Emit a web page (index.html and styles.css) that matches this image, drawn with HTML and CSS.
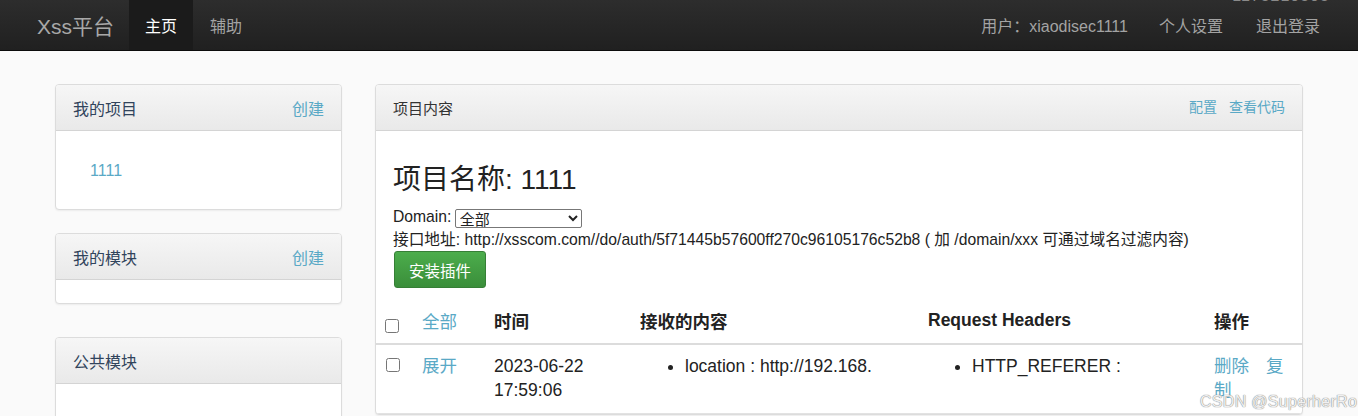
FILE: index.html
```html
<!DOCTYPE html>
<html lang="zh-CN">
<head>
<meta charset="utf-8">
<title>Xss平台</title>
<link rel="stylesheet" href="styles.css">
</head>
<body>
<header class="navbar">
  <div class="nav-left">
    <a class="brand">Xss平台</a>
    <a class="nav-item active">主页</a>
    <a class="nav-item">辅助</a>
  </div>
  <div class="nav-right">
    <span class="qq">1175219595</span>
    <a class="nav-item">用户：xiaodisec1111</a>
    <a class="nav-item">个人设置</a>
    <a class="nav-item">退出登录</a>
  </div>
</header>

<div class="container">
  <aside class="sidebar">
    <section class="panel">
      <div class="panel-head"><span class="side-title">我的项目</span><a class="link">创建</a></div>
      <div class="panel-body list"><a class="link">1111</a></div>
    </section>
    <section class="panel">
      <div class="panel-head"><span class="side-title">我的模块</span><a class="link">创建</a></div>
      <div class="panel-body empty"></div>
    </section>
    <section class="panel public">
      <div class="panel-head"><span class="side-title">公共模块</span></div>
      <div class="panel-body list"><a class="link">默认模块代码</a></div>
    </section>
  </aside>

  <main class="panel main">
    <div class="panel-head">
      <span class="main-title">项目内容</span>
      <span class="head-links"><a class="link">配置</a><a class="link">查看代码</a></span>
    </div>
    <div class="main-body">
      <h1 class="proj-name">项目名称: 1111</h1>
      <div class="line">Domain: <select class="domain"><option>全部</option></select></div>
      <div class="line">接口地址: http://xsscom.com//do/auth/5f71445b57600ff270c96105176c52b8 ( 加 /domain/xxx 可通过域名过滤内容)</div>
      <button class="btn-green">安装插件</button>
    </div>
    <table class="data">
      <colgroup>
        <col class="c-check"><col class="c-all"><col class="c-time"><col class="c-content"><col class="c-headers"><col class="c-op">
      </colgroup>
      <thead>
        <tr>
          <th class="chk"><input type="checkbox"></th>
          <th><a class="link normal">全部</a></th>
          <th>时间</th>
          <th>接收的内容</th>
          <th>Request Headers</th>
          <th>操作</th>
        </tr>
      </thead>
      <tbody>
        <tr>
          <td class="chk"><input type="checkbox"></td>
          <td><a class="link">展开</a></td>
          <td>2023-06-22<br>17:59:06</td>
          <td><ul class="ul-content"><li>location : http://192.168.</li></ul></td>
          <td><ul class="ul-headers"><li>HTTP_REFERER :</li></ul></td>
          <td class="ops"><a class="link op-del">删除</a><a class="link">复制</a></td>
        </tr>
      </tbody>
    </table>
  </main>
</div>

<div class="watermark">CSDN @SuperherRo</div>
</body>
</html>
```

FILE: styles.css
```css
* { box-sizing: border-box; }
html, body { margin: 0; padding: 0; }
body {
  background: #fafafa;
  font-family: "Liberation Sans", "Noto Sans CJK SC", sans-serif;
  color: #333;
  height: 416px;
  overflow: hidden;
  position: relative;
}
a { text-decoration: none; }
.link { color: #5aa9c6; }

.navbar {
  height: 51px;
  background: linear-gradient(#2d2d2d, #202020);
  border-bottom: 1px solid #0c0c0c;
  display: flex;
  justify-content: space-between;
  align-items: stretch;
  padding: 0 38px 0 18px;
}
.nav-left, .nav-right { display: flex; align-items: stretch; position: relative; }
.brand {
  color: #a8a8a8;
  font-size: 21px;
  display: flex;
  align-items: center;
  padding: 0 19px 0 19px;
  margin-right: -4px;
}
.nav-item {
  color: #a3a3a3;
  font-size: 16px;
  display: flex;
  align-items: center;
}
.nav-left .nav-item { padding: 0 17px; }
.nav-left .nav-item.active {
  background: #1b1b1b;
  color: #fff;
  width: 64px;
  padding: 0;
  justify-content: center;
}
.nav-right .nav-item { padding: 0 0 0 33px; }
.nav-right .nav-item:nth-of-type(1) { margin-left: 3px; }
.nav-right .nav-item:nth-of-type(2) { padding-left: 31px; }
.qq {
  position: absolute;
  top: -13px;
  right: -10px;
  color: #8a8a8a;
  font-size: 16px;
  letter-spacing: 1px;
}

.container {
  width: 1248px;
  margin: 33px auto 0;
  display: flex;
  gap: 33px;
  align-items: flex-start;
}
.sidebar {
  width: 287px;
  flex: none;
  display: flex;
  flex-direction: column;
  gap: 23px;
}
.sidebar .public { margin-top: 10px; }
.panel {
  background: #fff;
  border: 1px solid #dcdcdc;
  border-radius: 4px;
  box-shadow: 0 1px 2px rgba(0,0,0,0.06);
  overflow: hidden;
}
.panel-head {
  height: 46px;
  background: linear-gradient(#f6f6f6, #e9e9e9);
  border-bottom: 1px solid #d4d4d4;
  display: flex;
  align-items: center;
  justify-content: space-between;
  padding: 0 17px;
  font-size: 16px;
}
.side-title { color: #31445c; }
.panel-body.list { padding: 31px 34px 27px; font-size: 16px; height: 78px; }
.panel-body.empty { height: 23px; }
.sidebar .public .panel-body.list { height: 60px; padding-top: 28px; }

.main { width: 928px; flex: none; }
.main-title { font-size: 15px; color: #333; }
.head-links { font-size: 14px; display: flex; gap: 12px; margin-top: -4px; }
.main-body { padding: 30px 17px 0; }
.proj-name {
  font-size: 28px;
  font-weight: normal;
  margin: 0 0 6px;
  line-height: 38px;
  color: #222;
}
.line { font-size: 15.7px; line-height: 23px; color: #222; }
.domain {
  font-size: 15px;
  width: 127px;
  height: 19px;
  padding: 0;
  margin-left: -1px;
  border: 1px solid #777;
  border-radius: 2px;
  background: #fff;
  color: #222;
  font-family: "Liberation Sans", "Noto Sans CJK SC", sans-serif;
  vertical-align: -3px;
}
.btn-green {
  display: block;
  margin-top: 0;
  margin-left: 1px;
  width: 92px;
  height: 37px;
  background: linear-gradient(#4cad4c, #3a8e3a);
  border: 1px solid #367f36;
  border-radius: 3px;
  color: #fff;
  font-size: 15.5px;
  font-family: "Liberation Sans", "Noto Sans CJK SC", sans-serif;
  padding: 0;
}

.data {
  width: 100%;
  table-layout: fixed;
  border-collapse: collapse;
  font-size: 17.5px;
  color: #222;
}
.c-check { width: 36px; }
.c-all { width: 72px; }
.c-time { width: 146px; }
.c-content { width: 288px; }
.c-headers { width: 286px; }
.c-op { width: auto; }
.data th {
  text-align: left;
  font-weight: bold;
  height: 56px;
  padding: 10px 10px 0 10px;
  border-bottom: 2px solid #dcdcdc;
  vertical-align: middle;
}
.data th .normal { font-weight: normal; }
.data th.chk { padding: 20px 0 0 9px; }
.data td {
  vertical-align: top;
  padding: 9px 10px 11px 10px;
  line-height: 24px;
  border-bottom: 1px solid #e2e2e2;
}
.data td.chk { padding: 13px 0 0 10px; line-height: 14px; }
.data input[type=checkbox] { margin: 0; width: 14px; height: 14px; display: block; }
.data ul { margin: 0; }
.data .ul-content { padding-left: 45px; }
.data .ul-headers { padding-left: 44px; }
.data td.ops { padding-right: 12px; }
.op-del { margin-right: 17px; }

.watermark {
  position: absolute;
  left: 1200px;
  top: 393px;
  font-size: 16px;
  color: #f0f0f0;
  text-shadow: 0 0 1px #888, 0 0 1px #888;
  letter-spacing: 0.3px;
}
```
